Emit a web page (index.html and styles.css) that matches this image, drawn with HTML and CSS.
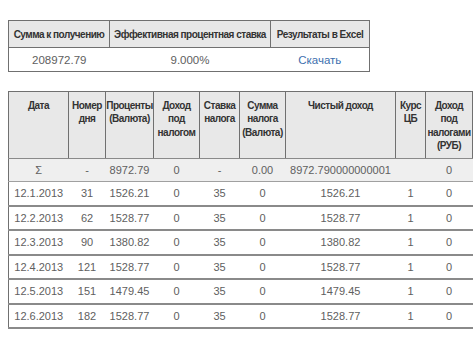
FILE: index.html
```html
<!DOCTYPE html>
<html>
<head>
<meta charset="utf-8">
<link rel="stylesheet" href="styles.css">
</head>
<body>
<table class="summary">
  <colgroup><col class="s1"><col class="s2"><col class="s3"></colgroup>
  <thead>
    <tr><th>Сумма к получению</th><th>Эффективная процентная ставка</th><th>Результаты в Excel</th></tr>
  </thead>
  <tbody>
    <tr><td>208972.79</td><td>9.000%</td><td><a class="link" href="#">Скачать</a></td></tr>
  </tbody>
</table>

<table class="details">
  <colgroup>
    <col class="c1"><col class="c2"><col class="c3"><col class="c4"><col class="c5"><col class="c6"><col class="c7"><col class="c8"><col class="c9">
  </colgroup>
  <thead>
    <tr>
      <th>Дата</th>
      <th>Номер дня</th>
      <th>Проценты (Валюта)</th>
      <th>Доход под налогом</th>
      <th>Ставка налога</th>
      <th>Сумма налога (Валюта)</th>
      <th>Чистый доход</th>
      <th>Курс ЦБ</th>
      <th>Доход под налогами (РУБ)</th>
    </tr>
  </thead>
  <tbody>
    <tr class="total"><td>Σ</td><td>-</td><td>8972.79</td><td>0</td><td>-</td><td>0.00</td><td>8972.790000000001</td><td></td><td>0</td></tr>
    <tr><td>12.1.2013</td><td>31</td><td>1526.21</td><td>0</td><td>35</td><td>0</td><td>1526.21</td><td>1</td><td>0</td></tr>
    <tr><td>12.2.2013</td><td>62</td><td>1528.77</td><td>0</td><td>35</td><td>0</td><td>1528.77</td><td>1</td><td>0</td></tr>
    <tr><td>12.3.2013</td><td>90</td><td>1380.82</td><td>0</td><td>35</td><td>0</td><td>1380.82</td><td>1</td><td>0</td></tr>
    <tr><td>12.4.2013</td><td>121</td><td>1528.77</td><td>0</td><td>35</td><td>0</td><td>1528.77</td><td>1</td><td>0</td></tr>
    <tr><td>12.5.2013</td><td>151</td><td>1479.45</td><td>0</td><td>35</td><td>0</td><td>1479.45</td><td>1</td><td>0</td></tr>
    <tr><td>12.6.2013</td><td>182</td><td>1528.77</td><td>0</td><td>35</td><td>0</td><td>1528.77</td><td>1</td><td>0</td></tr>
  </tbody>
</table>
</body>
</html>
```

FILE: styles.css
```css
html, body {
  margin: 0;
  padding: 0;
  background: #ffffff;
}
body {
  padding: 20px 0 0 8px;
  font-family: "Liberation Sans", Arial, sans-serif;
  color: #606060;
}
table {
  border-collapse: collapse;
  table-layout: fixed;
}
th {
  font-family: "Liberation Sans", Arial, sans-serif;
  font-weight: bold;
  color: #333333;
  font-size: 10px;
  letter-spacing: -0.5px;
}
td {
  font-size: 11px;
  text-align: center;
  padding: 0;
}

/* summary table */
.summary {
  width: 361px;
  border: 1px solid #707070;
}
.s1 { width: 101px; }
.s2 { width: 161px; }
.s3 { width: 99px; }
.summary th {
  height: 26px;
  padding: 0;
  background: #e8e8e8;
  border: 1px solid #707070;
  text-align: center;
  white-space: nowrap;
}
.summary td {
  height: 23px;
  font-size: 11.5px;
}
.link {
  color: #3d6fae;
  text-decoration: none;
}

/* details table */
.details {
  margin-top: 19px;
  width: 464px;
  border-left: 1px solid #707070;
}
.c1 { width: 60px; }
.c2 { width: 37px; }
.c3 { width: 48px; }
.c4 { width: 46px; }
.c5 { width: 40px; }
.c6 { width: 46px; }
.c7 { width: 110px; }
.c8 { width: 30px; }
.c9 { width: 47px; }
.details th {
  height: 59px;
  padding: 7px 0 0 0;
  vertical-align: top;
  line-height: 13.3px;
  background: #e8e8e8;
  border: 1px solid #707070;
  border-bottom: 1px solid #8a8a8a;
  text-align: center;
}
.details td {
  height: 22.5px;
  border-bottom: 2px solid #8a8a8a;
}
.details .total td {
  background: #efefef;
  height: 22px;
  border-bottom: 1px solid #a0a0a0;
}
```
